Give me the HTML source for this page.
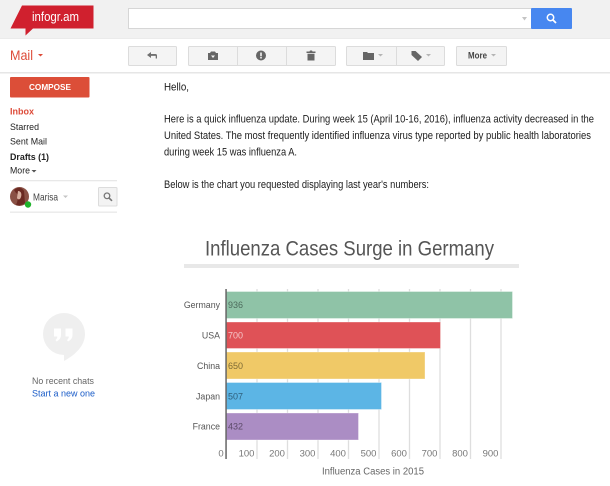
<!DOCTYPE html>
<html>
<head>
<meta charset="utf-8">
<style>
html,body{margin:0;padding:0;width:610px;height:486px;overflow:hidden;background:#fff}
svg{display:block;position:absolute;left:0;top:0;filter:blur(0.35px)}
text{font-family:"Liberation Sans",sans-serif}
.b{fill:#1c1c1c;font-size:11.2px}
.l{fill:#555;font-size:8.8px;text-anchor:end}
.t{fill:#777;font-size:9.5px;text-anchor:middle}
.v{font-size:9px}
.g{stroke:#dedede;stroke-width:1.3}
.btn{fill:#f4f4f4;stroke:#dcdcdc;stroke-width:1}
.bar{stroke:#fff;stroke-opacity:.35;stroke-width:1}
</style>
</head>
<body>
<svg width="610" height="486" viewBox="0 0 610 486" xmlns="http://www.w3.org/2000/svg">
<!-- header -->
<rect x="0" y="0" width="610" height="38" fill="#f1f1f1"/>
<rect x="0" y="38" width="610" height="1" fill="#ebebeb"/>
<rect x="0" y="72" width="610" height="1.500" fill="#e6e6e6"/>
<!-- logo -->
<path d="M22 5.500H93.500V28.500H33L25.500 35.500V28.500H10.500Z" fill="#d0202e"/>
<text x="32" y="21" font-size="12.500" fill="#fff" textLength="47" lengthAdjust="spacingAndGlyphs">infogr.am</text>
<!-- search -->
<rect x="128.500" y="8.500" width="403" height="20" fill="#fff" stroke="#d6d6d6"/>
<path d="M522 17h5l-2.500 3.500z" fill="#c4c4c4"/>
<rect x="531" y="8" width="41" height="21" rx="1" fill="#4787f0"/>
<circle cx="550.500" cy="17.500" r="3.200" fill="none" stroke="#fff" stroke-width="1.500"/>
<path d="M553 20l3 3" stroke="#fff" stroke-width="1.800"/>
<!-- Mail -->
<text x="10" y="60" font-size="14" fill="#dd4b39" textLength="23" lengthAdjust="spacingAndGlyphs">Mail</text>
<path d="M38 54h5l-2.500 2.500z" fill="#dd4b39"/>
<!-- toolbar -->
<rect x="128.500" y="46.500" width="48" height="19" rx="1" class="btn"/>
<path d="M147 55l4-3v2h4.500c1 0 1.500 .7 1.500 1.500v3h-1.300v-2.600h-4.700v2.100z" fill="#707070"/>
<rect x="188.500" y="46.500" width="147" height="19" rx="1" class="btn"/>
<path d="M237.500 46.500v19M286.500 46.500v19" stroke="#dcdcdc"/>
<path d="M208 53h2l1-1.500h4l1 1.500h2v7h-10z" fill="#666"/>
<path d="M211 55.500h4l-2 2.500z" fill="#f4f4f4"/>
<circle cx="261" cy="55.500" r="5" fill="#666"/>
<rect x="260.200" y="52.500" width="1.600" height="3.800" fill="#f4f4f4"/>
<rect x="260.200" y="57" width="1.600" height="1.500" fill="#f4f4f4"/>
<path d="M306.500 51.500h3l.5-1h2l.5 1h3v1.500h-9zM307.500 53.800h7v6.700h-7z" fill="#666"/>
<rect x="346.500" y="46.500" width="98" height="19" rx="1" class="btn"/>
<path d="M396.500 46.500v19" stroke="#dcdcdc"/>
<path d="M363 52h4l1 1h6v7h-11z" fill="#666"/>
<path d="M378 54h5l-2.500 2.500z" fill="#b5b5b5"/>
<path d="M411.500 51h4l6.500 6-4 4-6.500-6z" fill="#666"/>
<path d="M426 54h5l-2.500 2.500z" fill="#b5b5b5"/>
<rect x="456.500" y="46.500" width="50" height="19" rx="1" class="btn"/>
<text x="468" y="58.500" font-size="9" font-weight="bold" fill="#444" textLength="19" lengthAdjust="spacingAndGlyphs">More</text>
<path d="M491 54h5l-2.500 2.500z" fill="#b5b5b5"/>
<!-- left nav -->
<rect x="10" y="77" width="79.500" height="20.500" rx="1" fill="#dc4e38"/>
<text x="29" y="90" font-size="8.500" font-weight="bold" fill="#fff" textLength="42" lengthAdjust="spacingAndGlyphs">COMPOSE</text>
<text x="10" y="114.500" font-size="9.500" font-weight="bold" fill="#dd4b39" textLength="24" lengthAdjust="spacingAndGlyphs">Inbox</text>
<text x="10" y="130" font-size="9.500" fill="#222" textLength="29" lengthAdjust="spacingAndGlyphs">Starred</text>
<text x="10" y="144.500" font-size="9.500" fill="#222" textLength="37" lengthAdjust="spacingAndGlyphs">Sent Mail</text>
<text x="10" y="160" font-size="9.500" font-weight="bold" fill="#222" textLength="39" lengthAdjust="spacingAndGlyphs">Drafts (1)</text>
<text x="10" y="173.500" font-size="9.500" fill="#222" textLength="20" lengthAdjust="spacingAndGlyphs">More</text>
<path d="M31.500 170h5l-2.500 2.500z" fill="#555"/>
<rect x="10" y="180" width="107" height="1.300" fill="#e8e8e8"/>
<rect x="10" y="211.500" width="107" height="1.300" fill="#e8e8e8"/>
<!-- avatar -->
<circle cx="19.500" cy="196.500" r="9.500" fill="#8a5145"/>
<path d="M14 190c3-3 8-3 10 1l1 12c-2 2-7 3-9 2c2-4 3-11 0-12z" fill="#6b2a22"/>
<path d="M18 191c3 0 4 3 3 6s-3 3-4 1z" fill="#d8b0a0"/>
<circle cx="28" cy="204.500" r="3.200" fill="#1fb32b"/>
<text x="33" y="200.500" font-size="10.500" fill="#444" textLength="25" lengthAdjust="spacingAndGlyphs">Marisa</text>
<path d="M63 195.500h5l-2.500 2.500z" fill="#c4c4c4"/>
<rect x="98.500" y="187.500" width="18.500" height="18.500" rx="1" fill="#f3f3f3" stroke="#dcdcdc"/>
<circle cx="107" cy="195.800" r="2.800" fill="none" stroke="#777" stroke-width="1.300"/>
<path d="M109 198l3 2.800" stroke="#777" stroke-width="1.600"/>
<!-- hangouts -->
<path d="M64 313a21 21 0 0 1 21 21c0 12-10 21-21 27v-6a21 21 0 0 1 0-42z" fill="#efefef"/>
<path d="M54 328.500h7v6.500c0 3-2 5.500-4.500 6.500l-1-1.500c1-.8 1.800-2 1.800-3.500h-3.300zM65.500 328.500h7v6.500c0 3-2 5.500-4.500 6.500l-1-1.500c1-.8 1.800-2 1.800-3.500h-3.300z" fill="#fff"/>
<text x="32" y="384" font-size="9.500" fill="#666" textLength="62" lengthAdjust="spacingAndGlyphs">No recent chats</text>
<text x="32" y="396.500" font-size="9.500" fill="#1a5cc8" textLength="63" lengthAdjust="spacingAndGlyphs">Start a new one</text>
<!-- body -->
<text class="b" x="164" y="90.500" textLength="25" lengthAdjust="spacingAndGlyphs">Hello,</text>
<text class="b" x="164" y="122.500" textLength="430" lengthAdjust="spacingAndGlyphs">Here is a quick influenza update. During week 15 (April 10-16, 2016), influenza activity decreased in the</text>
<text class="b" x="164" y="139" textLength="427" lengthAdjust="spacingAndGlyphs">United States. The most frequently identified influenza virus type reported by public health laboratories</text>
<text class="b" x="164" y="155.500" textLength="133" lengthAdjust="spacingAndGlyphs">during week 15 was influenza A.</text>
<text class="b" x="164" y="188" textLength="265" lengthAdjust="spacingAndGlyphs">Below is the chart you requested displaying last year's numbers:</text>
<!-- chart -->
<text x="205" y="255.500" font-size="21" fill="#555" textLength="289" lengthAdjust="spacingAndGlyphs">Influenza Cases Surge in Germany</text>
<rect x="184" y="264" width="335" height="4" fill="#e8e8e8"/>
<path class="g" d="M257 289v170M287.500 289v170M318 289v170M348.500 289v170M379 289v170M409.500 289v170M440 289v170M470.500 289v170M501 289v170"/>
<rect class="bar" x="226" y="291.500" width="286.500" height="27" fill="#8fc3a7"/>
<rect class="bar" x="226" y="322" width="214.500" height="26.500" fill="#df5257"/>
<rect class="bar" x="226" y="352" width="199" height="27" fill="#f0c967"/>
<rect class="bar" x="226" y="382.500" width="155.500" height="27" fill="#5cb5e5"/>
<rect class="bar" x="226" y="413" width="132.500" height="27" fill="#ab8dc4"/>
<rect x="225.300" y="289" width="1.500" height="170" fill="#666"/>
<text class="l" x="220" y="308">Germany</text>
<text class="l" x="220" y="338.500">USA</text>
<text class="l" x="220" y="369">China</text>
<text class="l" x="220" y="399.500">Japan</text>
<text class="l" x="220" y="429.500">France</text>
<text class="v" x="228" y="308" fill="#4d6b5c">936</text>
<text class="v" x="228" y="338.500" fill="#f5c5c7">700</text>
<text class="v" x="228" y="369" fill="#7d6a35">650</text>
<text class="v" x="228" y="399.500" fill="#2f5f7c">507</text>
<text class="v" x="228" y="429.500" fill="#5c4a69">432</text>
<text class="t" x="221" y="456.500">0</text>
<text class="t" x="246.500" y="456.500">100</text>
<text class="t" x="277" y="456.500">200</text>
<text class="t" x="307.500" y="456.500">300</text>
<text class="t" x="338" y="456.500">400</text>
<text class="t" x="368.500" y="456.500">500</text>
<text class="t" x="399" y="456.500">600</text>
<text class="t" x="429.500" y="456.500">700</text>
<text class="t" x="460" y="456.500">800</text>
<text class="t" x="490.500" y="456.500">900</text>
<text x="322" y="474.500" font-size="10" fill="#666" textLength="102" lengthAdjust="spacingAndGlyphs">Influenza Cases in 2015</text>
</svg>
</body>
</html>
